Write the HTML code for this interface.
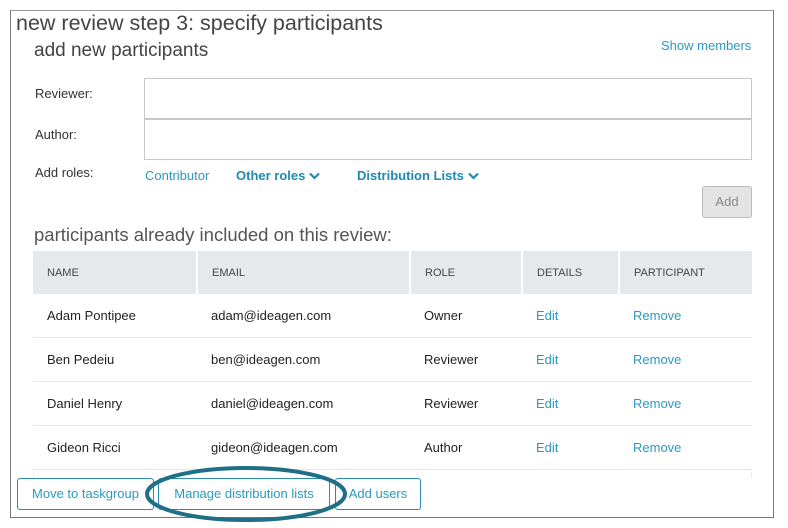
<!DOCTYPE html>
<html><head><style>
body{margin:0;width:788px;height:528px;background:#fff;font-family:"Liberation Sans",sans-serif;position:relative;overflow:hidden;color:#333}
.a{position:absolute;white-space:nowrap}
.box{position:absolute;left:10px;top:10px;width:762px;height:506px;border:1px solid #777;border-top-color:#999}
.inp{position:absolute;left:144px;width:606px;height:39px;border:1px solid #c8c8c8;background:#fff}
.lbl{font-size:13px;color:#333}
.link{color:#2a9ac0}
.bl{color:#1e8ab3;font-weight:bold;font-size:13px}
table{position:absolute;left:33px;top:251px;width:719px;border-collapse:collapse;font-size:13px;table-layout:fixed}
th{background:#e6e9ec;height:43px;padding:0 0 0 14px;text-align:left;font-weight:normal;font-size:11px;color:#444;border-left:2px solid #fff}
th:first-child{border-left:none}
td{height:43px;padding:0 0 0 14px;border-bottom:1px solid #e6e6e6;color:#222}
td.l{color:#2a9ac0}
.btn{position:absolute;top:478px;height:32px;border:1px solid #2a8ab0;border-radius:3px;background:#fff;color:#2a9ac0;font-size:13px;line-height:30px;text-align:center;box-sizing:border-box}
</style></head><body>
<div class="box"></div>
<div class="a" style="left:16px;top:11px;font-size:21.5px;color:#444">new review step 3: specify participants</div>
<div class="a" style="left:34px;top:40px;font-size:19px;color:#444">add new participants</div>
<div class="a link" style="left:661px;top:38px;font-size:13px">Show members</div>
<div class="a lbl" style="left:35px;top:86px">Reviewer:</div>
<div class="a lbl" style="left:35px;top:127px">Author:</div>
<div class="a lbl" style="left:35px;top:165px">Add roles:</div>
<div class="inp" style="top:78px"></div>
<div class="inp" style="top:119px"></div>
<div class="a link" style="left:145px;top:168px;font-size:13px">Contributor</div>
<div class="a bl" style="left:236px;top:168px">Other roles <svg width="11" height="8" viewBox="0 0 11 8"><path d="M1 1.5l4.5 4.5 4.5-4.5" fill="none" stroke="#1e8ab3" stroke-width="2.2"/></svg></div>
<div class="a bl" style="left:357px;top:168px">Distribution Lists <svg width="11" height="8" viewBox="0 0 11 8"><path d="M1 1.5l4.5 4.5 4.5-4.5" fill="none" stroke="#1e8ab3" stroke-width="2.2"/></svg></div>
<div class="a" style="left:702px;top:186px;width:50px;height:32px;border:1px solid #bbb;border-radius:3px;background:#e4e4e4;color:#888;font-size:13px;line-height:30px;text-align:center;box-sizing:border-box">Add</div>
<div class="a" style="left:34px;top:224px;font-size:18.5px;color:#555">participants already included on this review:</div>
<table>
<colgroup><col style="width:164px"><col style="width:213px"><col style="width:112px"><col style="width:97px"><col></colgroup>
<tr><th>NAME</th><th>EMAIL</th><th>ROLE</th><th>DETAILS</th><th>PARTICIPANT</th></tr>
<tr><td>Adam Pontipee</td><td>adam@ideagen.com</td><td>Owner</td><td class="l">Edit</td><td class="l">Remove</td></tr>
<tr><td>Ben Pedeiu</td><td>ben@ideagen.com</td><td>Reviewer</td><td class="l">Edit</td><td class="l">Remove</td></tr>
<tr><td>Daniel Henry</td><td>daniel@ideagen.com</td><td>Reviewer</td><td class="l">Edit</td><td class="l">Remove</td></tr>
<tr><td>Gideon Ricci</td><td>gideon@ideagen.com</td><td>Author</td><td class="l">Edit</td><td class="l">Remove</td></tr>
</table>
<div class="a" style="left:33px;top:471px;width:717px;height:7px;border-left:1px solid #eee;border-right:1px solid #eee"></div>
<div class="btn" style="left:17px;width:137px">Move to taskgroup</div>
<div class="btn" style="left:158px;width:172px">Manage distribution lists</div>
<div class="btn" style="left:335px;width:86px">Add users</div>
<svg class="a" style="left:0;top:0" width="788" height="528"><ellipse cx="246" cy="494" rx="99" ry="26" fill="none" stroke="#1f6f87" stroke-width="4"/></svg>
</body></html>
